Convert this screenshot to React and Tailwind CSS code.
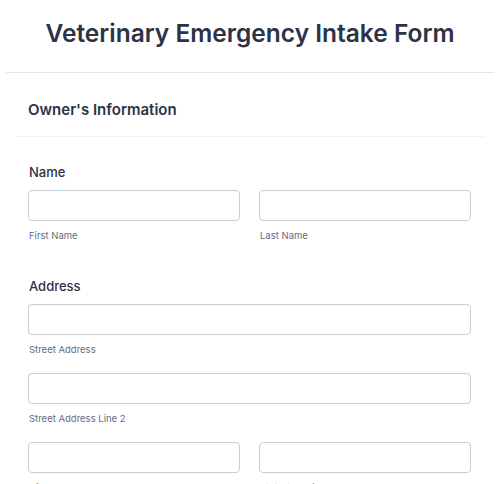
export default function App() {
  return (
    <div className="w-[500px] h-[484px] overflow-hidden bg-white font-['Inter',sans-serif] text-[#2c3345]">
      {/* Header */}
      <div className="h-[72px] flex items-center justify-center pb-[6px]">
        <h1 className="text-[24.5px] font-semibold">Veterinary Emergency Intake Form</h1>
      </div>
      <div className="mx-[6px] border-b border-[#e3e5ee]" />

      {/* Section header */}
      <div className="mx-[16px] border-b border-[#f1f2f6] px-[12px] pt-[27px] pb-[16px]">
        <h2 className="text-[15px] leading-[20px] font-semibold">Owner's Information</h2>
      </div>

      <div className="pl-[28px] pr-[29px]">
        {/* Name */}
        <div className="pt-[26px]">
          <label className="block pl-[1px] text-[13px] leading-[18px] font-medium">Name</label>
          <div className="mt-[9px] grid grid-cols-2 gap-[19px]">
            <div>
              <div className="h-[31px] rounded-[4px] border border-[#c8ccd9]" />
              <div className="mt-[9px] pl-[1px] text-[9.5px] leading-[12px] text-[#666c7e]">First Name</div>
            </div>
            <div>
              <div className="h-[31px] rounded-[4px] border border-[#c8ccd9]" />
              <div className="mt-[9px] pl-[1px] text-[9.5px] leading-[12px] text-[#666c7e]">Last Name</div>
            </div>
          </div>
        </div>

        {/* Address */}
        <div className="pt-[35px]">
          <label className="block pl-[1px] text-[13px] leading-[18px] font-medium">Address</label>
          <div className="mt-[9px]">
            <div className="h-[31px] rounded-[4px] border border-[#c8ccd9]" />
            <div className="mt-[9px] pl-[1px] text-[9.5px] leading-[12px] text-[#666c7e]">Street Address</div>
          </div>
          <div className="mt-[17px]">
            <div className="h-[31px] rounded-[4px] border border-[#c8ccd9]" />
            <div className="mt-[9px] pl-[1px] text-[9.5px] leading-[12px] text-[#666c7e]">Street Address Line 2</div>
          </div>
          <div className="mt-[17px] grid grid-cols-2 gap-[19px]">
            <div>
              <div className="h-[31px] rounded-[4px] border border-[#c8ccd9]" />
              <div className="mt-[9px] pl-[1px] text-[9.5px] leading-[12px] text-[#666c7e]">City</div>
            </div>
            <div>
              <div className="h-[31px] rounded-[4px] border border-[#c8ccd9]" />
              <div className="mt-[9px] pl-[1px] text-[9.5px] leading-[12px] text-[#666c7e]">State / Province</div>
            </div>
          </div>
        </div>
      </div>
    </div>
  );
}
